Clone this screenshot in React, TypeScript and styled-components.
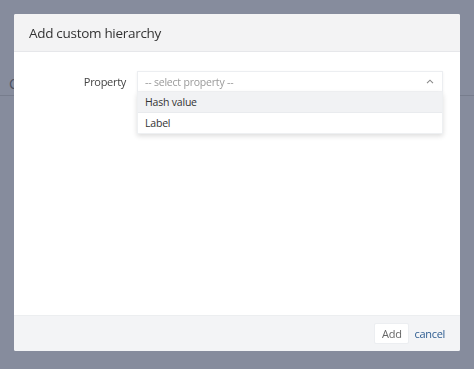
import React from 'react';
import styled, { createGlobalStyle } from 'styled-components';

const GlobalStyle = createGlobalStyle`
    html, body {
        margin: 0;
        padding: 0;
        height: 100%;
        overflow: hidden;
    }
    body {
        font-family: "Open Sans", "Noto Sans", sans-serif;
        background: #f7f7f8;
        color: #333;
    }
`

const PageBehind = styled.div`
    padding-top: 74px;
    height: 369px;
    box-sizing: border-box;
`

const PageTab = styled.div`
    padding: 0 9px 2px;
    font-size: 14px;
    color: #555;
    border-bottom: 1px solid #ccc;
`

const Backdrop = styled.div`
    position: fixed;
    inset: 0;
    background: rgba(70, 80, 105, 0.64);
    padding: 14px;
    display: flex;
    align-items: flex-start;
`

const Modal = styled.div`
    width: 446px;
    height: 337px;
    background: #fff;
    border-radius: 2px;
    display: flex;
    flex-direction: column;
    overflow: hidden;
`

const Header = styled.div`
    height: 37px;
    background: #f3f3f4;
    border-bottom: 1px solid #e6e7ea;
    display: flex;
    align-items: center;
    padding: 0 15px;
    font-size: 13.5px;
    letter-spacing: -0.3px;
    color: #333;
`

const Body = styled.div`
    flex: 1;
    padding: 19px 17px 0 15px;
`

const FormRow = styled.div`
    display: grid;
    grid-template-columns: 97px 1fr;
    column-gap: 11px;
    align-items: start;
`

const Label = styled.label`
    text-align: right;
    font-size: 11px;
    letter-spacing: -0.3px;
    line-height: 21px;
    color: #444;
`

const SelectWrap = styled.div`
    position: relative;
`

const SelectBox = styled.div`
    height: 21px;
    border: 1px solid #eceef1;
    border-bottom-color: #f3f4f6;
    box-sizing: border-box;
    display: flex;
    align-items: center;
    justify-content: space-between;
    padding: 0 8px 0 7px;
    font-size: 10.5px;
    letter-spacing: -0.2px;
    color: #9a9a9a;
    background: #fff;
    box-shadow: 0 1px 3px rgba(0, 0, 0, 0.06);
`

const Menu = styled.ul`
    position: absolute;
    left: 0;
    right: 0;
    top: 21px;
    margin: 0;
    padding: 0;
    list-style: none;
    background: #fff;
    box-shadow: 0 2px 5px rgba(0, 0, 0, 0.14);
    border: 1px solid #eef0f2;
    border-top: none;
`

const MenuItem = styled.li<{ active?: boolean }>`
    height: 20px;
    display: flex;
    align-items: center;
    padding: 0 7px;
    font-size: 10.5px;
    letter-spacing: -0.2px;
    color: #333;
    background: ${props => props.active ? '#f1f2f4' : '#fff'};
    border-bottom: ${props => props.active ? '1px solid #e9ebee' : 'none'};
`

const Footer = styled.div`
    height: 35px;
    background: #f3f4f6;
    border-top: 1px solid #eceef0;
    display: flex;
    align-items: center;
    justify-content: flex-end;
    padding: 0 15px;
    gap: 5px;
`

const Button = styled.button`
    height: 21px;
    width: 35px;
    padding: 0;
    font-family: inherit;
    font-size: 11px;
    letter-spacing: -0.2px;
    color: #666;
    background: #fff;
    border: 1px solid #eceef1;
    border-radius: 2px;
`

const LinkButton = styled.a`
    font-size: 11px;
    letter-spacing: -0.3px;
    color: #2e5d91;
    text-decoration: none;
`

const Chevron = () => (
    <svg width="8" height="5" viewBox="0 0 8 5">
        <path d="M1 4.2 L4 1.2 L7 4.2" fill="none" stroke="#888" strokeWidth="1.1" />
    </svg>
)

export default function App() {
    return (
        <>
            <GlobalStyle />
            <PageBehind>
                <PageTab>Custom</PageTab>
            </PageBehind>
            <Backdrop>
                <Modal>
                    <Header>Add custom hierarchy</Header>
                    <Body>
                        <FormRow>
                            <Label>Property</Label>
                            <SelectWrap>
                                <SelectBox>
                                    <span>-- select property --</span>
                                    <Chevron />
                                </SelectBox>
                                <Menu>
                                    <MenuItem active>Hash value</MenuItem>
                                    <MenuItem>Label</MenuItem>
                                </Menu>
                            </SelectWrap>
                        </FormRow>
                    </Body>
                    <Footer>
                        <Button>Add</Button>
                        <LinkButton href="#">cancel</LinkButton>
                    </Footer>
                </Modal>
            </Backdrop>
        </>
    )
}
